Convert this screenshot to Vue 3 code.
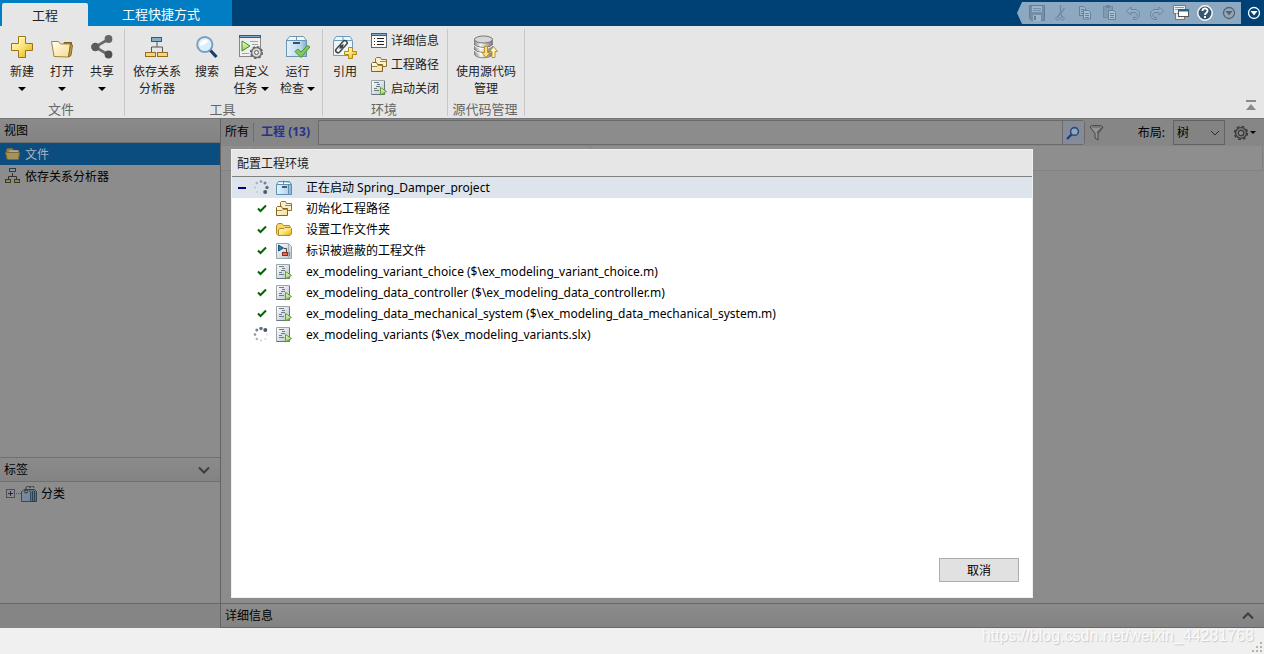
<script setup>
import { ref } from 'vue'

const views = [
  { label: '文件', icon: 'i-folder-open', active: true },
  { label: '依存关系分析器', icon: 'i-tree', active: false }
]

const quickTools = [
  { name: '保存', icon: 'i-save' },
  { name: '剪切', icon: 'i-cut' },
  { name: '复制', icon: 'i-copy' },
  { name: '粘贴', icon: 'i-paste' },
  { name: '撤销', icon: 'i-undo' },
  { name: '重做', icon: 'i-redo' },
  { name: '切换窗口', icon: 'i-windows' },
  { name: '帮助', icon: 'i-help' },
  { name: '更多', icon: 'i-more' }
]

const fileTools = [
  { label: '新建', icon: 'i-new' },
  { label: '打开', icon: 'i-open' },
  { label: '共享', icon: 'i-share' }
]

const toolTools = [
  { lines: ['依存关系', '分析器'], icon: 'i-tree-big', size: 'w56' },
  { lines: ['搜索'], icon: 'i-search', size: 'w44' },
  { lines: ['自定义', '任务'], icon: 'i-task', size: 'w44', menu: true },
  { lines: ['运行', '检查'], icon: 'i-check-run', size: 'w48', menu: true }
]

const envTools = [
  { label: '详细信息', icon: 'i-details' },
  { label: '工程路径', icon: 'i-paths' },
  { label: '启动关闭', icon: 'i-script' }
]

const steps = [
  { text: '初始化工程路径', icon: 'i-paths', done: true },
  { text: '设置工作文件夹', icon: 'i-folder', done: true },
  { text: '标识被遮蔽的工程文件', icon: 'i-shadow', done: true },
  { text: 'ex_modeling_variant_choice ($\\ex_modeling_variant_choice.m)', icon: 'i-script', done: true },
  { text: 'ex_modeling_data_controller ($\\ex_modeling_data_controller.m)', icon: 'i-script', done: true },
  { text: 'ex_modeling_data_mechanical_system ($\\ex_modeling_data_mechanical_system.m)', icon: 'i-script', done: true },
  { text: 'ex_modeling_variants ($\\ex_modeling_variants.slx)', icon: 'i-script', done: false }
]

const query = ref('')
const layout = ref('树')
</script>

<template>
  <div class="app">
    <svg class="defs" width="0" height="0" aria-hidden="true">
      <defs>
        <linearGradient id="gold" x1="0" y1="0" x2="1" y2="1">
          <stop offset="0" stop-color="#fffbd0" /><stop offset="0.5" stop-color="#fbe57a" /><stop offset="1" stop-color="#e0a800" />
        </linearGradient>
        <linearGradient id="cream" x1="0" y1="0" x2="1" y2="1">
          <stop offset="0" stop-color="#fffef0" /><stop offset="1" stop-color="#f3dc90" />
        </linearGradient>
        <linearGradient id="blue" x1="0" y1="0" x2="1" y2="0">
          <stop offset="0" stop-color="#e4f2fa" /><stop offset="0.7" stop-color="#b9d8ea" /><stop offset="1" stop-color="#7fb0cd" />
        </linearGradient>
        <linearGradient id="metal" x1="0" y1="0" x2="1" y2="0">
          <stop offset="0" stop-color="#8e8e8e" /><stop offset="0.35" stop-color="#f8f8f8" /><stop offset="1" stop-color="#777" />
        </linearGradient>
        <linearGradient id="page" x1="0" y1="0" x2="1" y2="1">
          <stop offset="0" stop-color="#fff" /><stop offset="1" stop-color="#b9c4cc" />
        </linearGradient>
        <linearGradient id="leaf" x1="0" y1="0" x2="0" y2="1">
          <stop offset="0" stop-color="#f2ffd0" /><stop offset="1" stop-color="#8fce58" />
        </linearGradient>
      </defs>

      <symbol id="i-new" viewBox="0 0 24 24">
        <path d="M8.500 1.500h7v7h7v7h-7v7h-7v-7h-7v-7h7z" fill="url(#gold)" stroke="#9a7414" />
        <path d="M9.500 9.500v-7h5" fill="none" stroke="#fffde8" />
      </symbol>
      <symbol id="i-open" viewBox="0 0 24 24">
        <path d="M14 9.500V7.500h7.500v2" fill="#9b7b32" stroke="#7a5c16" />
        <path d="M1.500 6.500h7l2 2.500h10L18.500 22 4 21.500z" fill="url(#cream)" stroke="#a5843a" />
        <path d="M20.500 9l2 1-1.500 10.500-2.500 1.500z" fill="#c09b43" stroke="#8a6a1e" />
      </symbol>
      <symbol id="i-share" viewBox="0 0 24 24">
        <path d="M18 4.500L5 12l13 7.500" fill="none" stroke="#6b6b6b" stroke-width="2.600" />
        <circle cx="18.500" cy="4" r="3.900" fill="#666" /><circle cx="5.300" cy="12" r="4.200" fill="#5c5c5c" /><circle cx="18.500" cy="19.500" r="3.900" fill="#505050" />
      </symbol>
      <symbol id="i-tree-big" viewBox="0 0 24 24">
        <path d="M12 7v5M6.500 17v-5h11v5" fill="none" stroke="#555" />
        <rect x="6.500" y="2.500" width="10" height="4" fill="#84aecb" stroke="#365a75" />
        <rect x="0.500" y="17.500" width="10" height="4" fill="#f4d77c" stroke="#94701e" />
        <rect x="12.500" y="17.500" width="10" height="4" fill="#f4d77c" stroke="#94701e" />
      </symbol>
      <symbol id="i-tree" viewBox="0 0 16 16">
        <path d="M7.500 5v4M3.500 11V8.500h8V11" fill="none" stroke="#333" />
        <rect x="4.500" y="0.500" width="6" height="3" fill="#8095a1" stroke="#2b3c4a" />
        <rect x="0.500" y="11.500" width="5" height="3" fill="#8f8663" stroke="#40381f" />
        <rect x="9.500" y="11.500" width="5" height="3" fill="#8f8663" stroke="#40381f" />
      </symbol>
      <symbol id="i-search" viewBox="0 0 24 24">
        <path d="M15 15l6.500 7" stroke="#173f6c" stroke-width="3.200" />
        <circle cx="9.800" cy="9.500" r="7.600" fill="#d8efff" stroke="#7d9fbd" stroke-width="2" />
        <path d="M4.500 11c0-4 3-6.500 8-6.500 1 2-1 5-8 6.500z" fill="#fff" />
      </symbol>
      <symbol id="i-task" viewBox="0 0 24 24">
        <rect x="0.500" y="0.500" width="21" height="21" fill="#eef0f0" stroke="#888" />
        <path d="M0 1.500h22" stroke="#2d5f8c" stroke-width="3" /><path d="M1 1.500h20" stroke="#7fa9cb" />
        <path d="M11 6.500h8M13 9.500h6M3 18.500h7" stroke="#a4a4a4" />
        <path d="M3 6l8 5-8 5z" fill="url(#leaf)" stroke="#458a20" />
        <circle cx="17.500" cy="17.500" r="5" fill="#ddd" stroke="#6e6e6e" stroke-width="1.500" />
        <circle cx="17.500" cy="17.500" r="6" fill="none" stroke="#606060" stroke-width="1.200" stroke-dasharray="2.400 2.300" />
        <circle cx="17.500" cy="17.500" r="2" fill="#eee" stroke="#606060" />
      </symbol>
      <symbol id="i-check-run" viewBox="0 0 24 24">
        <path d="M0.500 5.500l3-4h14l3 4" fill="#f0f8fc" stroke="#7096b0" />
        <rect x="0.500" y="5.500" width="20" height="16" fill="url(#blue)" stroke="#6b95b0" />
        <path d="M10.500 2v3" stroke="#7096b0" /><rect x="7" y="7" width="7" height="2" fill="#33536a" />
        <path d="M9 16.500l3-2.500 3 3 6.500-6.500L24 12l-9 10.500z" fill="#83c957" stroke="#4b9433" />
      </symbol>
      <symbol id="i-ref" viewBox="0 0 24 24">
        <path d="M0.500 5.500l2.500-4h14l2.500 4v15h-19z" fill="#edf6fa" stroke="#6d9cba" />
        <path d="M1 5.500h18M10 2v3" stroke="#6d9cba" />
        <g fill="none" stroke="#454545" stroke-width="1.500">
          <rect x="6.500" y="7" width="8" height="4.500" rx="2.200" transform="rotate(-48 10.500 9)" />
          <rect x="2" y="12" width="8" height="4.500" rx="2.200" transform="rotate(-48 6 14)" />
        </g>
        <path d="M6.500 13.500l4-4" stroke="#454545" stroke-width="1.500" />
        <path d="M15.500 12.500h4v4h4v3h-4v4h-4v-4h-4v-3h4z" fill="url(#gold)" stroke="#b58a14" />
      </symbol>
      <symbol id="i-db" viewBox="0 0 24 24">
        <path d="M0.500 4v15c0 5 18 5 18 0V4z" fill="url(#metal)" stroke="#858585" />
        <path d="M0.500 9c0 4.500 18 4.500 18 0M0.500 14c0 4.500 18 4.500 18 0" fill="none" stroke="#707070" />
        <path d="M0.500 10c0 4.500 18 4.500 18 0M0.500 15c0 4.500 18 4.500 18 0" fill="none" stroke="#fff" />
        <ellipse cx="9.500" cy="4.500" rx="9" ry="3.500" fill="#d7d7d7" stroke="#777" />
        <path d="M10.500 11.500h3v6H16l-4 5-4-5h2.500z" fill="#ffe183" stroke="#bd9022" />
        <path d="M18 22.500h3v-6h2.500l-4-5-4 5H18z" fill="#fff6cf" stroke="#bd9022" />
      </symbol>
      <symbol id="i-details" viewBox="0 0 16 16">
        <rect x="0.500" y="0.500" width="15" height="14" fill="#fafafa" stroke="#666" />
        <path d="M0 1.500h16" stroke="#2f638f" stroke-width="3" /><path d="M1 1.500h14" stroke="#7ca7c8" />
        <path d="M3 5.500h1M3 8.500h1M3 11.500h1M6 5.500h7M6 8.500h7M6 11.500h7" stroke="#222" />
      </symbol>
      <symbol id="i-paths" viewBox="0 0 16 16">
        <path d="M4.500 8.500v-7l1-1h4l1 2h5v7h-11z" fill="#fbf0cd" stroke="#8f7230" /><path d="M9 4.500h6" fill="none" stroke="#a58843" />
        <path d="M0.500 14.500v-8l1-1h4l1 2h5v7z" fill="url(#cream)" stroke="#856420" />
        <path d="M1 9.500h5l1-1h4" fill="none" stroke="#a58843" />
      </symbol>
      <symbol id="i-folder" viewBox="0 0 16 16">
        <path d="M0.500 11.500V3.500l1.500-2h4l1.500 2h6l1 2v7l-1 1H2z" fill="#f6d568" stroke="#b88a24" />
        <path d="M2.500 13.500V7.500l1.500-1h4l1-1h5.500l1 1V12l-1.500 1.500z" fill="url(#gold)" stroke="#b88a24" />
      </symbol>
      <symbol id="i-folder-open" viewBox="0 0 16 16">
        <path d="M1.500 12.500V3.500l1-1h5l1 2h5v3" fill="#8e7a4c" stroke="#806530" />
        <path d="M4 6V4.500h9V7" fill="#aaa" stroke="#999" />
        <path d="M2.500 13.500l-2-7h14l-1 7z" fill="#a2935f" stroke="#84682c" />
      </symbol>
      <symbol id="i-script" viewBox="0 0 16 16">
        <path d="M0.500 0.500h13v14h-13z" fill="url(#page)" stroke="#98a5ad" />
        <path d="M0.500 14.500h13V1" fill="none" stroke="#66767f" />
        <path d="M3 2.500h5M6 4.500h3M5 6.500h4M3 8.500h3M3 10.500h5" stroke="#6d7a82" />
        <path d="M9.500 7.500l6 4-6 3.500z" fill="url(#leaf)" stroke="#66993f" />
      </symbol>
      <symbol id="i-project" viewBox="0 0 16 16">
        <path d="M0.500 4.500l2-3h11l2 3v10h-15z" fill="url(#blue)" stroke="#5d90b0" />
        <path d="M1 4.500h14M7.500 0.500v4M12.500 5v9" stroke="#5d90b0" /><path d="M2 3.500h5M8 3.500h6" stroke="#fff" />
        <rect x="6" y="6" width="5" height="2" fill="#3d5a70" />
      </symbol>
      <symbol id="i-shadow" viewBox="0 0 16 16">
        <path d="M0.500 0.500h12l3 3v12h-15z" fill="url(#page)" stroke="#98a5ad" />
        <path d="M12.500 0.500v15" stroke="#a3adb5" />
        <path d="M2.500 2l5 3-5 3z" fill="#2c7cb8" stroke="#1b547f" />
        <path d="M8 5.500h2.500V9" fill="none" stroke="#444" />
        <rect x="6.500" y="9.500" width="5" height="3" fill="#e26a55" stroke="#8c2d20" />
        <path d="M13.500 9v4" stroke="#c96a5c" />
      </symbol>
      <symbol id="i-tags" viewBox="0 0 16 16">
        <path d="M4.500 15.500v-10l2-2h7l2 2v10z" fill="#5a7485" stroke="#2c4250" />
        <path d="M0.500 15.500V6L3 3.500h4L9.500 6v9.500z" fill="#75899a" stroke="#35495a" />
        <path d="M11.500 5v10M13.500 5v10" stroke="#2c4250" />
        <circle cx="5" cy="5.500" r="1.500" fill="#888" stroke="#333" />
        <path d="M5 5V2q0-2 2-2t2 2q0-2 2-2t2 2" fill="none" stroke="#3a3a3a" />
      </symbol>
      <symbol id="i-save" viewBox="0 0 16 16">
        <path d="M0.500 0.500h15v15h-13l-2-2z" fill="#748fa5" stroke="#647f95" />
        <rect x="3" y="1" width="10" height="6" fill="#9ab5c9" /><path d="M4 3.500h8M4 5.500h8" stroke="#748fa5" />
        <rect x="4" y="10" width="8" height="6" fill="#9ab5c9" /><rect x="5" y="11" width="2" height="4" fill="#647f95" />
      </symbol>
      <symbol id="i-cut" viewBox="0 0 16 16">
        <path d="M7.500 0v8l-3 4M11.500 3L7.500 9l2 3" fill="none" stroke="#6f8a9f" stroke-width="1.300" />
        <circle cx="4.500" cy="13.500" r="1.700" fill="none" stroke="#6f8a9f" /><circle cx="9.500" cy="13.500" r="1.700" fill="none" stroke="#6f8a9f" />
      </symbol>
      <symbol id="i-copy" viewBox="0 0 16 16">
        <path d="M2.500 1.500h4l2 2v7h-6z" fill="#9bb6ca" stroke="#66829a" /><path d="M4 4.500h3M4 6.500h3M4 8.500h3" stroke="#66829a" />
        <path d="M6.500 5.500h5l2 2v6.500h-7z" fill="#a8c1d3" stroke="#66829a" /><path d="M8 8.500h4M8 10.500h4M8 12.500h4" stroke="#66829a" />
      </symbol>
      <symbol id="i-paste" viewBox="0 0 16 16">
        <path d="M2.500 1.500h9v11h-9z" fill="#809cb1" stroke="#708ba1" /><rect x="5" y="0" width="4" height="3" fill="#6b869b" />
        <path d="M7.500 5.500h5l2 2v7h-7z" fill="#a8c1d3" stroke="#66829a" /><path d="M9 8.500h4M9 10.500h4M9 12.500h4" stroke="#66829a" />
      </symbol>
      <symbol id="i-undo" viewBox="0 0 16 16">
        <path d="M1.500 6L6 2v2.500h4c6 0 6 10 0 10H8.500v-2H10c3 0 3-5 0-5H6V10z" fill="#93afc4" stroke="#6c879d" />
      </symbol>
      <symbol id="i-redo" viewBox="0 0 16 16">
        <path d="M14.500 6L10 2v2.500H6c-6 0-6 10 0 10h1.500v-2H6c-3 0-3-5 0-5h4V10z" fill="#93afc4" stroke="#6c879d" />
      </symbol>
      <symbol id="i-windows" viewBox="0 0 16 16">
        <path d="M1.500 8.500v-7h10v3" fill="#e9e9e9" stroke="#efefef" stroke-width="2" /><path d="M0.500 0.500h12v8h-12z" fill="#eee" stroke="#777" />
        <path d="M2 2.500h9M2 4.500h4" stroke="#999" />
        <path d="M2.500 8v6.500h9V12" fill="#eee" stroke="#777" />
        <rect x="5.500" y="4.500" width="10" height="7" fill="#fff" stroke="#555" /><path d="M5 5.500h11" stroke="#2c6490" stroke-width="2" />
      </symbol>
      <symbol id="i-help" viewBox="0 0 16 16">
        <circle cx="8" cy="8" r="7.200" fill="#36566f" stroke="#f5f5f5" stroke-width="1.500" />
        <path d="M5.500 6c0-3.500 5-3.500 5-.300C10.500 8 8 7.800 8 10" fill="none" stroke="#fff" stroke-width="1.900" /><rect x="7" y="11" width="2" height="2" fill="#fff" />
      </symbol>
      <symbol id="i-more" viewBox="0 0 16 16">
        <circle cx="8" cy="8" r="5.500" fill="none" stroke="#5c6064" stroke-width="1.300" /><path d="M4.500 6h7L8 10.500z" fill="#5c6064" />
      </symbol>
      <symbol id="i-more-light" viewBox="0 0 16 16">
        <circle cx="8" cy="8" r="5.500" fill="none" stroke="#fff" stroke-width="1.300" /><path d="M4.500 6h7L8 10.500z" fill="#fff" />
      </symbol>
      <symbol id="i-spin" viewBox="0 0 16 16">
        <circle cx="8" cy="1.500" r="1.300" fill="#8b93a0" /><circle cx="12" cy="3" r="1.500" fill="#747f8f" />
        <circle cx="14" cy="7.500" r="1.700" fill="#627087" /><circle cx="12.200" cy="12" r="2" fill="#4a5971" />
        <circle cx="8" cy="14" r="1" fill="#dde0e4" /><circle cx="3.800" cy="12" r="1" fill="#c6cbd3" />
        <circle cx="2" cy="7.500" r="1" fill="#bcc2cb" /><circle cx="3.800" cy="3" r="1.200" fill="#a5adb8" />
      </symbol>
      <symbol id="i-spin-next" viewBox="0 0 16 16">
        <circle cx="8" cy="1.500" r="1.700" fill="#627087" /><circle cx="12.300" cy="3" r="2" fill="#4a5971" />
        <circle cx="14" cy="7.500" r="1" fill="#dde0e4" /><circle cx="12.300" cy="12" r="1" fill="#d4d8dd" />
        <circle cx="8" cy="13.500" r="1" fill="#c7ccd3" /><circle cx="3.800" cy="12" r="1.200" fill="#a8b0bb" />
        <circle cx="2" cy="7.500" r="1.300" fill="#8b93a0" /><circle cx="3.800" cy="3" r="1.500" fill="#747f8f" />
      </symbol>
      <symbol id="i-tick" viewBox="0 0 10 10">
        <path d="M1 4.500l2.500 2.500L9 1.500" fill="none" stroke="#006400" stroke-width="2" />
      </symbol>
      <symbol id="i-magnify" viewBox="0 0 16 16">
        <path d="M7 9l-5 5" stroke="#263f72" stroke-width="2.400" /><circle cx="9.500" cy="6.500" r="3.900" fill="#94a9b4" stroke="#284e83" stroke-width="1.600" />
      </symbol>
      <symbol id="i-filter" viewBox="0 0 16 16">
        <path d="M1 2c0-2 13-2 13 0L9 8.500V15l-3-2V8.500z" fill="#949494" stroke="#444" /><path d="M8.500 8l4.500-5" stroke="#5a5a5a" stroke-width="2" /><ellipse cx="7.500" cy="2" rx="5" ry="1" fill="#777" />
      </symbol>
      <symbol id="i-gear" viewBox="0 0 16 16">
        <circle cx="8" cy="8" r="6.500" fill="none" stroke="#3a3a3a" stroke-width="1.400" stroke-dasharray="2.700 2.400" />
        <circle cx="8" cy="8" r="5.400" fill="#8a8a8a" stroke="#3a3a3a" stroke-width="1.400" /><circle cx="8" cy="8" r="2.800" fill="#8c8c8c" stroke="#3a3a3a" stroke-width="1.400" />
      </symbol>
    </svg>

    <header class="titlebar">
      <nav class="tabs">
        <button class="tab tab-on">工程</button>
        <button class="tab">工程快捷方式</button>
      </nav>
      <div class="quick">
        <svg class="quick-tip" viewBox="0 0 6 22"><path d="M6 0H5L0 11l5 11h1z" fill="#8ca9c1" /></svg>
        <div class="quick-items">
          <button v-for="q in quickTools" :key="q.name" class="quick-btn" :aria-label="q.name">
            <svg class="ic16"><use :href="'#' + q.icon" /></svg>
          </button>
        </div>
        <button class="quick-end" aria-label="选项"><svg class="ic16"><use href="#i-more-light" /></svg></button>
      </div>
    </header>

    <section class="ribbon">
      <div class="group">
        <div class="tools pad2">
          <button v-for="t in fileTools" :key="t.label" class="big w40">
            <svg class="ic24"><use :href="'#' + t.icon" /></svg>
            <span>{{ t.label }}</span>
            <span class="line"><i class="caret"></i></span>
          </button>
        </div>
        <p class="group-name">文件</p>
      </div>
      <div class="group">
        <div class="tools pad4">
          <button v-for="t in toolTools" :key="t.icon" class="big" :class="t.size">
            <svg class="ic24"><use :href="'#' + t.icon" /></svg>
            <span>{{ t.lines[0] }}</span>
            <span v-if="t.lines[1]" class="line">{{ t.lines[1] }}<i v-if="t.menu" class="caret"></i></span>
          </button>
        </div>
        <p class="group-name">工具</p>
      </div>
      <div class="group">
        <div class="tools env">
          <button class="big w44"><svg class="ic24"><use href="#i-ref" /></svg><span>引用</span></button>
          <div class="stack">
            <button v-for="t in envTools" :key="t.label" class="small">
              <svg class="ic16"><use :href="'#' + t.icon" /></svg>{{ t.label }}
            </button>
          </div>
        </div>
        <p class="group-name">环境</p>
      </div>
      <div class="group">
        <div class="tools pad4">
          <button class="big w72"><svg class="ic24"><use href="#i-db" /></svg><span>使用源代码</span><span class="line">管理</span></button>
        </div>
        <p class="group-name">源代码管理</p>
      </div>
      <button class="collapse" aria-label="折叠工具条">
        <svg viewBox="0 0 12 12"><path d="M1 1h10" stroke="#8a8a8a" stroke-width="2" /><path d="M1 10l5-6 5 6z" fill="#8a8a8a" /></svg>
      </button>
    </section>

    <main class="workspace">
      <aside class="side">
        <section class="views">
          <h2 class="side-title">视图</h2>
          <button v-for="v in views" :key="v.label" class="view" :class="{ 'view-on': v.active }">
            <svg class="ic16"><use :href="'#' + v.icon" /></svg>{{ v.label }}
          </button>
        </section>
        <section class="labels">
          <h2 class="side-title label-title">标签
            <svg class="chev" viewBox="0 0 12 8"><path d="M1 1.500l5 5 5-5" fill="none" stroke="#3c3c3c" stroke-width="2" /></svg>
          </h2>
          <div class="node">
            <svg class="plus" viewBox="0 0 15 9"><rect x="0.500" y="0.500" width="8" height="8" fill="none" stroke="#505050" /><path d="M2 4.500h5M4.500 2v5" stroke="#1b2a55" /><path d="M10 4.500h5" stroke="#555" stroke-dasharray="1 1" /></svg>
            <svg class="ic16"><use href="#i-tags" /></svg>分类
          </div>
        </section>
        <div class="side-foot"></div>
      </aside>

      <section class="content">
        <div class="filterbar">
          <a class="crumb" href="#">所有</a>
          <a class="crumb crumb-on" href="#">工程 (13)</a>
          <div class="search">
            <input v-model="query" type="text" aria-label="搜索" />
            <button aria-label="搜索"><svg class="ic16"><use href="#i-magnify" /></svg></button>
          </div>
          <button class="plain filter" aria-label="筛选"><svg class="ic16"><use href="#i-filter" /></svg></button>
          <label class="layout-label" for="layout">布局:</label>
          <div class="select">
            <select id="layout" v-model="layout"><option>树</option><option>列表</option></select>
            <svg class="arrow" viewBox="0 0 10 6"><path d="M1 1l4 4 4-4" fill="none" stroke="#2c2c2c" /></svg>
          </div>
          <button class="plain gear" aria-label="设置"><svg class="ic16"><use href="#i-gear" /></svg><i class="caret caret-sm"></i></button>
        </div>
        <div class="columns"><span></span><span></span><span></span></div>
        <div class="blank"></div>
        <div class="detail">详细信息
          <svg class="chev" viewBox="0 0 12 8"><path d="M1 6.500l5-5 5 5" fill="none" stroke="#3c3c3c" stroke-width="2" /></svg>
        </div>
      </section>

      <div class="overlay">
        <div class="dialog" role="dialog" aria-labelledby="dlg-title">
          <h1 id="dlg-title" class="dialog-title">配置工程环境</h1>
          <ul class="steps">
            <li class="step step-head">
              <i class="minus"></i>
              <svg class="mark"><use href="#i-spin" /></svg>
              <svg class="ic16"><use href="#i-project" /></svg>
              <span>正在启动 Spring_Damper_project</span>
            </li>
            <li v-for="s in steps" :key="s.text" class="step">
              <i class="gap"></i>
              <svg v-if="s.done" class="mark tick"><use href="#i-tick" /></svg>
              <svg v-else class="mark"><use href="#i-spin-next" /></svg>
              <svg class="ic16"><use :href="'#' + s.icon" /></svg>
              <span>{{ s.text }}</span>
            </li>
          </ul>
          <div class="actions"><button class="cancel">取消</button></div>
        </div>
      </div>
    </main>

    <footer class="status">
      <span class="mark-url">https://blog.csdn.net/weixin_44281768</span>
      <svg class="grip" viewBox="0 0 12 12"><path d="M8 0h2v2H8zM4 4h2v2H4zM8 4h2v2H8zM0 8h2v2H0zM4 8h2v2H4zM8 8h2v2H8z" fill="#b8b4a4" /></svg>
    </footer>
  </div>
</template>

<style>
body { margin: 0; }
</style>

<style scoped>
.app {
  display: flex;
  flex-direction: column;
  min-height: 100vh;
  font: 12px/17px "Noto Sans", "Noto Sans CJK SC", sans-serif;
  color: #000;
  background: #f0f0f0;
}
.app *, .app *::before { box-sizing: border-box; }
.defs { position: absolute; }
button, input, select { font: inherit; color: inherit; margin: 0; padding: 0; border: 0; background: none; }
h1, h2, p, ul { margin: 0; padding: 0; font: inherit; list-style: none; }
a { color: inherit; text-decoration: none; }
svg { display: block; flex: none; }
.ic16 { width: 16px; height: 16px; }
.ic24 { width: 24px; height: 24px; }
.caret { display: inline-block; border: 4px solid transparent; border-top-color: #000; border-bottom: 0; }

.titlebar { display: flex; justify-content: space-between; height: 26px; background: #004175; }
.tabs { display: flex; align-items: flex-end; background: #007dc3; padding-left: 2px; }
.tab { height: 26px; width: 144px; padding: 2px 0 0 2px; font-size: 13px; line-height: 20px; color: #fff; }
.tab-on { width: 86px; height: 23px; padding: 0; color: #222; background: #e6e6e6; border-radius: 2px 2px 0 0; }
.quick { display: flex; align-items: center; }
.quick-tip { width: 6px; height: 22px; }
.quick-items { display: flex; height: 22px; padding-left: 2px; background: #8ca9c1; }
.quick-btn { display: grid; place-items: center; width: 24px; }
.quick-end { display: flex; justify-content: flex-end; width: 23px; padding-right: 2px; }

.ribbon { display: flex; height: 92px; background: #e6e6e6; color: #222; }
.group { display: flex; flex-direction: column; position: relative; padding-right: 1px; }
.group::before { content: ""; position: absolute; right: 0; top: 3px; bottom: 2px; width: 1px; background: #c8c8c8; }
.tools { display: flex; height: 74px; padding-top: 9px; }
.pad2 { padding-left: 2px; padding-right: 2px; }
.pad4 { padding-left: 4px; }
.env { padding-right: 8px; }
.big { display: flex; flex-direction: column; align-items: center; white-space: nowrap; }
.big > span:first-of-type { margin-top: 4px; }
.line { display: flex; align-items: center; gap: 3px; height: 17px; }
.w40 { width: 40px; }
.w44 { width: 44px; }
.w48 { width: 49px; }
.w56 { width: 56px; }
.w72 { width: 72px; padding-right: 4px; }
.stack { display: flex; flex-direction: column; padding-left: 4px; margin-top: -6px; }
.small { display: flex; align-items: center; gap: 4px; height: 24px; }
.group-name { padding-right: 2px; font-size: 13px; line-height: 18px; color: #666; text-align: center; }

.collapse { margin-left: auto; align-self: flex-end; margin-bottom: 6px; padding-right: 7px; }
.collapse svg { width: 12px; height: 12px; }

.workspace { position: relative; display: flex; flex: 1; background: #8c8c8c; border-top: 1px solid #777; }
.side { display: flex; flex-direction: column; width: 221px; border-right: 1px solid #636363; }
.views { flex: 1; }
.side-title { display: flex; align-items: center; justify-content: space-between; height: 24px; padding: 0 10px 0 4px; border-bottom: 1px solid #707070; background: linear-gradient(#8b8b8b, #838383); }
.label-title { height: 25px; border-top: 1px solid #707070; }
.chev { width: 12px; height: 8px; }
.view { display: flex; align-items: center; gap: 4px; width: 100%; height: 22px; padding-left: 5px; color: #000; }
.view-on { background: #0c4d80; color: #a6b5c1; }
.labels { height: 146px; }
.node { display: flex; align-items: center; height: 23px; padding-left: 6px; }
.plus { width: 15px; height: 9px; }
.node .ic16 { margin-right: 4px; }
.side-foot { height: 25px; border-top: 1px solid #686868; background: #858585; }

.content { flex: 1; display: flex; flex-direction: column; min-width: 0; }
.filterbar { display: flex; align-items: center; height: 27px; background: #868686; }
.crumb { padding: 0 4px; height: 19px; border-right: 1px solid #6d6d6d; }
.crumb-on { padding: 0 8px 0 7px; border: 0; font-weight: bold; color: #25338a; }
.search { display: flex; flex: 1; height: 25px; border: 1px solid #6a6a6a; border-radius: 0 3px 3px 0; background: #8c8c8c; }
.search input { flex: 1; min-width: 0; padding: 0 4px; }
.search button { display: grid; place-items: center; width: 22px; border-left: 1px solid #6a6a6a; background: #858b99; }
.plain { display: flex; align-items: center; }
.filter { margin: 0 33px 0 4px; }
.layout-label { margin-right: 8px; }
.select { position: relative; width: 52px; height: 25px; }
.select select { appearance: none; width: 100%; height: 100%; padding-left: 3px; border: 1px solid #626262; background: #838383; }
.arrow { position: absolute; right: 5px; top: 10px; width: 10px; height: 6px; pointer-events: none; }
.gear { gap: 1px; margin: 0 8px; }
.caret-sm { border-width: 3px 3px 0; }
.columns { display: flex; height: 25px; border-bottom: 1px solid #828282; background: #8e8e8e; margin-right: 1px; }
.columns span { border-right: 1px solid #828282; flex: 1; }
.columns span:nth-child(1) { flex: 0 0 34px; }
.columns span:nth-child(2) { flex: 0 0 336px; }
.blank { flex: 1; }
.detail { display: flex; align-items: center; justify-content: space-between; height: 25px; padding: 0 10px 0 4px; border-top: 1px solid #686868; border-bottom: 1px solid #686868; background: linear-gradient(#8b8b8b, #838383); }

.overlay { position: absolute; inset: 0; display: grid; place-items: center; }
.dialog { display: flex; flex-direction: column; width: 802px; max-width: 100%; height: 449px; background: #fff; border: 1px solid #f0f0f0; }
.dialog-title { height: 27px; padding: 5px 5px 0; color: #222; background: #e6e6e6; border-bottom: 1px solid #808080; }
.steps { flex: 1; }
.step { display: flex; align-items: center; height: 21px; padding-left: 6px; white-space: pre; }
.step-head { background: #dde4ec; }
.minus { width: 8px; height: 2px; margin-right: 7px; background: #000080; }
.gap { width: 15px; }
.mark { width: 16px; height: 16px; margin-right: 7px; }
.tick { width: 10px; height: 10px; margin: 0 9px 0 4px; }
.step span { margin-left: 14px; }
.actions { display: flex; justify-content: flex-end; padding: 0 13px 15px; }
.cancel { width: 80px; height: 24px; border: 1px solid #adadad; background: #e1e1e1; }

.status { position: relative; display: flex; justify-content: flex-end; height: 26px; padding-right: 10px; background: #f0f0f0; }
.mark-url { font: 16px/16px "Liberation Sans", Arial, sans-serif; color: #fafafa; text-shadow: 1px 1px 1px #c8c8c8; }
.grip { position: absolute; right: 0; bottom: 0; width: 12px; height: 12px; }
</style>
